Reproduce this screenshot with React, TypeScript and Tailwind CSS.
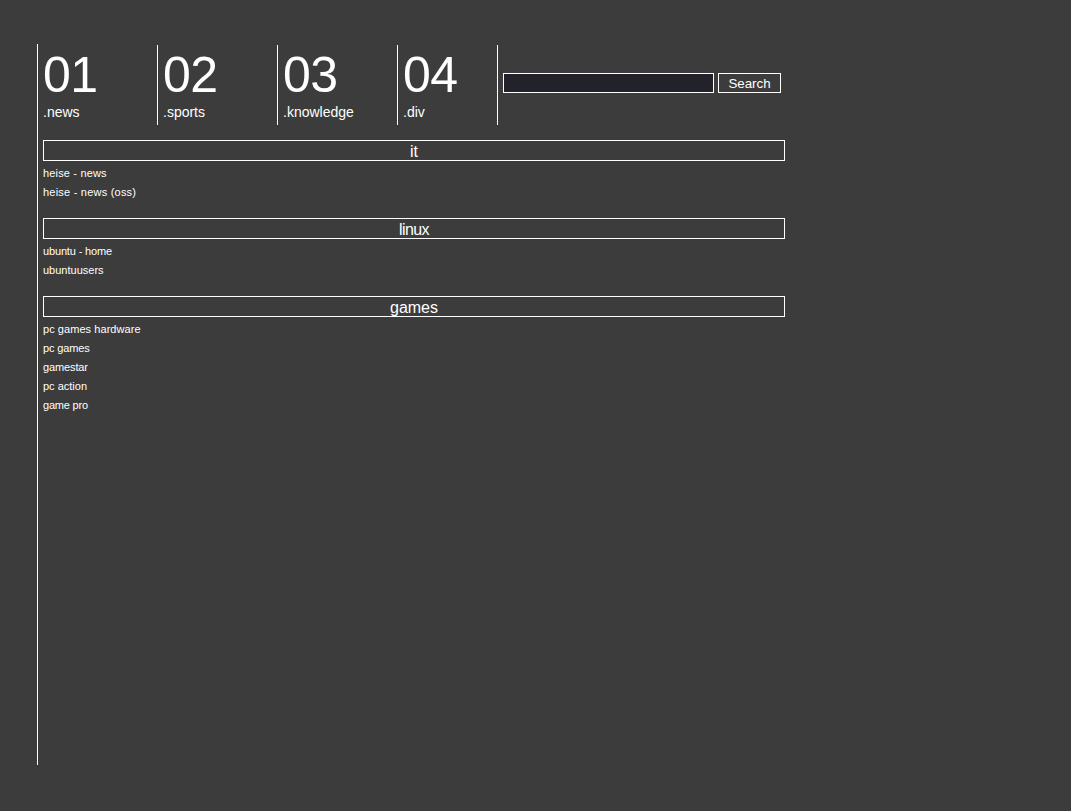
const tabs = [
  { n: "01", label: ".news", w: "w-[120px]" },
  { n: "02", label: ".sports", w: "w-[120px]" },
  { n: "03", label: ".knowledge", w: "w-[120px]" },
  { n: "04", label: ".div", w: "w-[100px]" },
];

const sections = [
  {
    title: "it",
    tc: "",
    links: [
      { t: "heise - news", c: "tracking-[0.17px]" },
      { t: "heise - news (oss)", c: "tracking-[0.22px]" },
    ],
  },
  {
    title: "linux",
    tc: "tracking-[-0.6px]",
    links: [
      { t: "ubuntu - home", c: "tracking-[-0.15px]" },
      { t: "ubuntuusers", c: "" },
    ],
  },
  {
    title: "games",
    tc: "",
    links: [
      { t: "pc games hardware", c: "tracking-[0.06px]" },
      { t: "pc games", c: "tracking-[-0.12px]" },
      { t: "gamestar", c: "tracking-[-0.12px]" },
      { t: "pc action", c: "" },
      { t: "game pro", c: "tracking-[-0.2px]" },
    ],
  },
];

export default function App() {
  return (
    <div className="min-h-[811px] bg-[#3c3c3c] pl-[37px] pt-[44px] font-['Liberation_Sans',Arial,sans-serif] text-white">
      <div className="h-[721px] w-[749px] border-l border-white pl-[5px]">
        <div className="ml-[-6px] flex h-[81px] items-stretch pt-px">
          {tabs.map((t) => (
            <div key={t.n} className={`${t.w} h-[80px] border-l border-white pl-[5px]`}>
              <div className="mt-[2px] h-[56px] text-[50px] leading-[56px] tracking-[-0.5px]">{t.n}</div>
              <div className="mt-[1px] text-[14px] leading-[16px]">{t.label}</div>
            </div>
          ))}
          <div className="flex h-[80px] items-start gap-[4px] border-l border-white pl-[5px] pt-[28px]">
            <input className="h-[20px] w-[211px] border border-white bg-[#22222a] outline-none" />
            <button className="h-[20px] w-[63px] border border-white pt-px text-[13.33px] leading-[18px] text-white">
              Search
            </button>
          </div>
        </div>
        <div className="mt-[15px] w-[742px]">
          {sections.map((s) => (
            <div key={s.title} className="mb-[16px]">
              <div className={`mb-[3px] h-[21px] border border-white pt-px text-center text-[16px] leading-[20px] ${s.tc}`}>
                {s.title}
              </div>
              {s.links.map((l) => (
                <a key={l.t} className={`block h-[19px] text-[11px] leading-[19px] text-white ${l.c}`}>
                  {l.t}
                </a>
              ))}
            </div>
          ))}
        </div>
      </div>
    </div>
  );
}
